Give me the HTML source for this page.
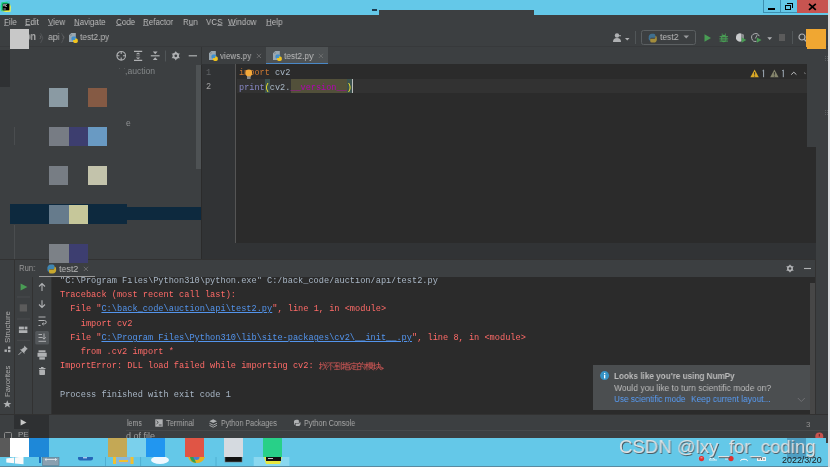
<!DOCTYPE html>
<html><head><meta charset="utf-8">
<style>
*{margin:0;padding:0;box-sizing:border-box}
html,body{width:830px;height:467px;overflow:hidden;background:#3c3f41;font-family:"Liberation Sans",sans-serif;color:#bbbbbb}
.a{position:absolute}
.t{position:absolute;white-space:pre;line-height:1;will-change:transform}
.m{font-family:"Liberation Mono",monospace}
.u{text-decoration:underline}
.mu{text-decoration:underline;text-decoration-color:#85878a;text-underline-offset:0px}
</style></head><body>
<!-- title bar -->
<div class="a" style="left:0;top:0;width:379px;height:14.5px;background:#64c8e8"></div>
<div class="a" style="left:379px;top:0;width:155px;height:10px;background:#64c8e8"></div>
<div class="a" style="left:534px;top:0;width:296px;height:15px;background:#64c8e8"></div>
<div class="a" style="left:372px;top:9px;width:5px;height:2px;background:#1d3c50"></div>
<!-- app icon -->
<svg class="a" style="left:-0.2px;top:1px" width="12" height="12"><defs><linearGradient id="pcg" x1="0" y1="0" x2="1" y2="1"><stop offset="0" stop-color="#21d789"/><stop offset="0.45" stop-color="#21d789"/><stop offset="0.75" stop-color="#fcf84a"/><stop offset="1" stop-color="#fcf84a"/></defs><path d="M1.5 1.2 L6.5 0.8 L9.2 0.3 L10.8 5.5 L10.6 10.8 L5 11 L1 10 L0.6 5z" fill="url(#pcg)"/><path d="M7 0.6 L9.2 0.3 L10 3 L8 2.5z" fill="#4fc8e0"/><rect x="2.6" y="2.6" width="6.8" height="6.8" fill="#000"/><path d="M3.4 3.5 h1.4 v1.4 h-1.4z M5.5 3.5 h1.5 M5.5 3.5 v2 M5.5 5.5 h1.5" stroke="#e8e8e8" stroke-width="0.6" fill="none"/><path d="M3.4 8 h2.5" stroke="#e8e8e8" stroke-width="0.7"/></svg>
<!-- window buttons -->
<div class="a" style="left:762.5px;top:0;width:35px;height:13.2px;border:1px solid #3d8fb0;border-top:none;border-right:none"></div>
<div class="a" style="left:780.2px;top:0;width:1px;height:13px;background:#3d8fb0"></div>
<div class="a" style="left:797.2px;top:0;width:30.6px;height:13.2px;background:#c75450"></div>
<div class="a" style="left:768.3px;top:8px;width:7.2px;height:1.7px;background:#000"></div>
<div class="a" style="left:785.3px;top:5px;width:6px;height:4.6px;border:1.3px solid #000"></div>
<div class="a" style="left:787px;top:3.4px;width:6px;height:4.6px;border-top:1.3px solid #000;border-right:1.3px solid #000"></div>
<svg class="a" style="left:808px;top:3px" width="9" height="8"><path d="M1 0.8 L7.8 6.8 M7.8 0.8 L1 6.8" stroke="#000" stroke-width="1.7"/></svg>
<!-- menu -->
<div class="t" style="left:4.2px;top:18px;font-size:9.3px;color:#bbb;transform:scaleX(0.86);transform-origin:0 0"><span class="mu">F</span>ile</div>
<div class="t" style="left:25.3px;top:18px;font-size:9.3px;color:#bbb;transform:scaleX(0.86);transform-origin:0 0"><span class="mu">E</span>dit</div>
<div class="t" style="left:48.2px;top:18px;font-size:9.3px;color:#bbb;transform:scaleX(0.86);transform-origin:0 0"><span class="mu">V</span>iew</div>
<div class="t" style="left:73.5px;top:18px;font-size:9.3px;color:#bbb;transform:scaleX(0.86);transform-origin:0 0"><span class="mu">N</span>avigate</div>
<div class="t" style="left:115.7px;top:18px;font-size:9.3px;color:#bbb;transform:scaleX(0.86);transform-origin:0 0"><span class="mu">C</span>ode</div>
<div class="t" style="left:143.4px;top:18px;font-size:9.3px;color:#bbb;transform:scaleX(0.86);transform-origin:0 0"><span class="mu">R</span>efactor</div>
<div class="t" style="left:182.7px;top:18px;font-size:9.3px;color:#bbb;transform:scaleX(0.86);transform-origin:0 0">R<span class="mu">u</span>n</div>
<div class="t" style="left:205.5px;top:18px;font-size:9.3px;color:#bbb;transform:scaleX(0.86);transform-origin:0 0">VC<span class="mu">S</span></div>
<div class="t" style="left:227.7px;top:18px;font-size:9.3px;color:#bbb;transform:scaleX(0.86);transform-origin:0 0"><span class="mu">W</span>indow</div>
<div class="t" style="left:266px;top:18px;font-size:9.3px;color:#bbb;transform:scaleX(0.86);transform-origin:0 0"><span class="mu">H</span>elp</div>
<!-- breadcrumb -->

<div class="t" style="left:39px;top:33.3px;font-size:8.5px;color:#6e6e6e">&#8250;</div>
<div class="t" style="left:47.70px;top:32.22px;font-size:9.77px;color:#bbb;transform:scaleX(0.879);transform-origin:0 0">api</div>
<div class="t" style="left:61.5px;top:33.3px;font-size:8.5px;color:#6e6e6e">&#8250;</div>
<div class="t" style="left:80.20px;top:32.22px;font-size:9.77px;color:#bbb;transform:scaleX(0.854);transform-origin:0 0">test2.py</div>
<!-- toolbar line -->
<div class="a" style="left:0;top:46.2px;width:830px;height:1px;background:#37393b"></div>
<div class="t" style="left:25.2px;top:32.4px;font-size:10px;color:#bdbdbd;font-weight:bold;transform:scaleX(0.9);transform-origin:0 0;opacity:0.85">on</div>
<div class="a" style="left:10px;top:29px;width:19px;height:20px;background:#c8c8c8"></div>


<!-- breadcrumb chevrons & icon -->
<svg class="a" style="left:39.5px;top:32.5px" width="4" height="11"><path d="M0.6 0.3 L2.9 5 L0.6 9.9" stroke="#5c5f61" stroke-width="0.7" fill="none"/></svg>
<svg class="a" style="left:61px;top:32.5px" width="4" height="11"><path d="M0.6 0.3 L2.9 5 L0.6 9.9" stroke="#5c5f61" stroke-width="0.7" fill="none"/></svg>
<svg class="a" style="left:69px;top:33px" width="10" height="11"><path d="M2.3 0 H6.8 V9 H0 V2.3z" fill="#9aa7b0"/><path d="M1 2.3 H2.3 V1" stroke="#6c7880" stroke-width="0.5" fill="none"/><rect x="2.4" y="3.6" width="5" height="3.9" rx="1.6" fill="#3d8fd0"/><rect x="4.1" y="5.4" width="4.7" height="4.5" rx="1.6" fill="#f2c41c"/><rect x="4.1" y="5.4" width="2" height="1.6" fill="#3d8fd0"/></svg>
<!-- right toolbar -->
<svg class="a" style="left:612px;top:33px" width="20" height="10"><circle cx="5" cy="2.5" r="2.2" fill="#afb1b3"/><path d="M1 9 q0-4 4-4 q4 0 4 4z" fill="#afb1b3"/><path d="M7 2 l2 0 l-1 2z" fill="#afb1b3"/><path d="M13 5 h4.5 l-2.25 2.5z" fill="#afb1b3"/></svg>
<div class="a" style="left:635px;top:31px;width:1px;height:12.5px;background:#515658"></div>
<div class="a" style="left:641px;top:30px;width:55px;height:14.5px;border:1px solid #5b5f61;border-radius:2.5px"></div>
<svg class="a" style="left:647.5px;top:32.8px" width="10" height="11"><path d="M0.8 4.8 a3.2 3.2 0 0 1 3.2-4 h1.8 a1.6 1.6 0 0 1 1.6 1.6 v2.4 h-4 a1.2 1.2 0 0 0-1.2 1.2 v1.8 a2.4 2.4 0 0 1-1.4-3z" fill="#3f6f8f"/><path d="M8.8 5.6 a3.2 3.2 0 0 1-3.2 4 h-1.8 a1.6 1.6 0 0 1-1.6-1.6 v-2.2 h4 a1.2 1.2 0 0 0 1.2-1.2 v-1.8 a2.4 2.4 0 0 1 1.4 2.8z" fill="#a38d3c"/></svg>
<div class="t" style="left:660.00px;top:33.10px;font-size:9.1px;color:#bbb;transform:scaleX(0.934);transform-origin:0 0">test2</div>
<svg class="a" style="left:683px;top:35px" width="7" height="5"><path d="M0.5 0.5 h5.5 l-2.75 3z" fill="#9a9c9e"/></svg>
<svg class="a" style="left:704px;top:33.5px" width="8" height="8"><path d="M0.5 0.3 L7 4 L0.5 7.7z" fill="#499c54"/></svg>
<svg class="a" style="left:719px;top:32.5px" width="10" height="10"><path d="M3.2 0.6 v1.2 M6.4 0.6 v1.2" stroke="#499c54" stroke-width="1"/><rect x="2.2" y="1.8" width="5.2" height="7.4" rx="2.4" fill="#499c54"/><path d="M0.6 3.6 h8.4 M0.4 5.9 h8.8 M0.6 8.1 h8.4" stroke="#499c54" stroke-width="1"/><path d="M3.2 4.75 h3.2 M3.2 7 h3.2" stroke="#3c3f41" stroke-width="0.9"/></svg>
<svg class="a" style="left:736px;top:33px" width="11" height="10"><path d="M5 0.4 a4.2 4.2 0 1 0 0 8.2z" fill="#c9cbcd"/><path d="M5 0.4 a4.2 4.2 0 0 1 3 1.4 v5.4 a4.2 4.2 0 0 1-3 1.4z" fill="#8a8c8e"/><path d="M5.6 4.2 L10.3 6.9 L5.6 9.7z" fill="#499c54"/></svg>
<svg class="a" style="left:751px;top:32.8px" width="12" height="10"><path d="M8.2 3.2 A3.9 3.9 0 1 0 5.5 8.3" stroke="#afb1b3" stroke-width="1" fill="none"/><path d="M4.3 5.5 L6.3 1.8" stroke="#afb1b3" stroke-width="0.9"/><path d="M5.8 4.4 L10.5 7.1 L5.8 9.8z" fill="#499c54"/></svg>
<svg class="a" style="left:766.5px;top:37px" width="6" height="4"><path d="M0.3 0.3 h4.8 l-2.4 2.6z" fill="#afb1b3"/></svg>
<div class="a" style="left:778.6px;top:34px;width:6.8px;height:7px;background:#5b5b5b"></div>
<div class="a" style="left:792px;top:31px;width:1px;height:12.5px;background:#515658"></div>
<svg class="a" style="left:798px;top:33px" width="10" height="10"><circle cx="4" cy="4" r="3" stroke="#afb1b3" stroke-width="1.2" fill="none"/><path d="M6.2 6.2 L9 9" stroke="#afb1b3" stroke-width="1.4"/></svg>
<div class="a" style="left:806px;top:29px;width:20px;height:20px;background:#f0a732"></div>

<!-- project panel -->
<div class="a" style="left:0;top:49.5px;width:9.6px;height:37.8px;background:#2f3133"></div>
<svg class="a" style="left:115px;top:50px" width="85" height="12">
<circle cx="6.2" cy="5.8" r="4.3" stroke="#afb1b3" stroke-width="1.1" fill="none"/>
<path d="M6.2 1.5 v2.5 M6.2 7.6 v2.5 M1.9 5.8 h2.5 M8 5.8 h2.5" stroke="#afb1b3" stroke-width="1.1"/>
<path d="M19 1.3 h8.2 M19 10.3 h8.2" stroke="#afb1b3" stroke-width="1.2"/>
<path d="M20.8 4.2 h4.6 l-2.3 -1.8z M20.8 7.4 h4.6 l-2.3 1.8z" fill="#afb1b3"/><path d="M21.5 5.8 h3.2" stroke="#afb1b3" stroke-width="0.6"/>
<path d="M35.8 5.8 h8.8" stroke="#afb1b3" stroke-width="1.2"/>
<path d="M37.8 1.5 h4.8 l-2.4 2.8z M37.8 10.1 h4.8 l-2.4 -2.8z" fill="#afb1b3"/>
<path d="M50.5 0.5 v11" stroke="#515658" stroke-width="1"/>
<g transform="translate(60.8,5.8)"><circle r="3.2" fill="#afb1b3"/><path d="M0 -4.8 L1.2 -2.6 L-1.2 -2.6z M0 4.8 L1.2 2.6 L-1.2 2.6z M-4.2 -2.4 L-1.6 -2.1 L-2.6 -0.3z M4.2 2.4 L1.6 2.1 L2.6 0.3z M4.2 -2.4 L1.6 -2.1 L2.6 -0.3z M-4.2 2.4 L-1.6 2.1 L-2.6 0.3z" fill="#afb1b3"/><circle r="1.4" fill="#3c3f41"/></g>
<path d="M73.7 5.8 h8.3" stroke="#afb1b3" stroke-width="1.2"/>
</svg>
<div class="a" style="left:119px;top:67.5px;width:1px;height:1px;background:#55585a"></div><div class="a" style="left:124.3px;top:67.5px;width:1px;height:1px;background:#55585a"></div><div class="t" style="left:125.2px;top:67px;font-size:8.6px;color:#85888a;transform:scaleX(1.0);transform-origin:0 0">,auction</div>
<div class="t" style="left:125.8px;top:118.6px;font-size:8.5px;color:#909294">e</div>
<div class="a" style="left:195.6px;top:65px;width:5.2px;height:103.5px;background:#4e5254"></div>
<div class="a" style="left:9.6px;top:204px;width:117px;height:19.8px;background:#0d293e"></div><div class="a" style="left:126.5px;top:206.6px;width:74.5px;height:13.8px;background:#0d293e"></div>
<div class="a" style="left:13.5px;top:127px;width:0.8px;height:18px;background:#4a4d4f"></div>
<div class="a" style="left:13.5px;top:225px;width:0.8px;height:34px;background:#4a4d4f"></div>
<!-- editor -->
<div class="a" style="left:201px;top:46.5px;width:605.5px;height:18px;background:#3c3f41"></div>
<div class="a" style="left:201px;top:64.2px;width:605.5px;height:194.5px;background:#2b2b2b"></div>
<div class="a" style="left:201.5px;top:64.2px;width:34px;height:179px;background:#313335"></div>
<div class="a" style="left:235.3px;top:64.2px;width:1.2px;height:179px;background:#555555"></div>
<div class="a" style="left:236.5px;top:78.7px;width:570px;height:14px;background:#323232"></div>
<div class="a" style="left:201.5px;top:243.2px;width:605px;height:15.5px;background:#313335"></div>
<div class="a" style="left:201px;top:64.2px;width:0.8px;height:194.5px;background:#2b2b2b"></div>
<div class="a" style="left:806.5px;top:146.5px;width:9.1px;height:96.7px;background:#2b2b2b"></div><div class="a" style="left:806.5px;top:243.2px;width:9.1px;height:15.5px;background:#313335"></div>
<!-- tabs -->
<div class="a" style="left:201px;top:47px;width:0.9px;height:17.5px;background:#323435"></div>
<div class="a" style="left:265.8px;top:46.5px;width:62.4px;height:17.7px;background:#4e5254"></div>
<div class="a" style="left:265.8px;top:62.5px;width:62.4px;height:1.8px;background:#4a88c7"></div>
<div class="t" style="left:220.00px;top:50.93px;font-size:9.66px;color:#bbb;transform:scaleX(0.844);transform-origin:0 0">views.py</div>
<div class="t" style="left:283.80px;top:50.93px;font-size:9.66px;color:#bbb;transform:scaleX(0.868);transform-origin:0 0">test2.py</div>
<svg class="a" style="left:256px;top:52.5px" width="6" height="6"><path d="M0.8 0.8 L5 5 M5 0.8 L0.8 5" stroke="#6e7072" stroke-width="0.9"/></svg>
<svg class="a" style="left:318px;top:52.5px" width="6" height="6"><path d="M0.8 0.8 L5 5 M5 0.8 L0.8 5" stroke="#6e7072" stroke-width="0.9"/></svg>
<svg class="a" style="left:208.5px;top:51px" width="10" height="11"><path d="M2.3 0 H6.8 V9 H0 V2.3z" fill="#9aa7b0"/><path d="M1 2.3 H2.3 V1" stroke="#6c7880" stroke-width="0.5" fill="none"/><rect x="2.4" y="3.6" width="5" height="3.9" rx="1.6" fill="#3d8fd0"/><rect x="4.1" y="5.4" width="4.7" height="4.5" rx="1.6" fill="#f2c41c"/><rect x="4.1" y="5.4" width="2" height="1.6" fill="#3d8fd0"/></svg>
<svg class="a" style="left:272.5px;top:51px" width="10" height="11"><path d="M2.3 0 H6.8 V9 H0 V2.3z" fill="#9aa7b0"/><path d="M1 2.3 H2.3 V1" stroke="#6c7880" stroke-width="0.5" fill="none"/><rect x="2.4" y="3.6" width="5" height="3.9" rx="1.6" fill="#3d8fd0"/><rect x="4.1" y="5.4" width="4.7" height="4.5" rx="1.6" fill="#f2c41c"/><rect x="4.1" y="5.4" width="2" height="1.6" fill="#3d8fd0"/></svg>
<!-- code -->
<div class="t m" style="left:206.3px;top:68.6px;font-size:8.55px;color:#606366">1</div>
<div class="t m" style="left:206.3px;top:83.1px;font-size:8.55px;color:#a4a3a3">2</div>
<div class="a" style="left:264.8px;top:78.7px;width:5.1px;height:14px;background:#3b514d"></div>
<div class="a" style="left:290.7px;top:78.7px;width:56.4px;height:14px;background:#52503a"></div>
<div class="a" style="left:347.1px;top:78.7px;width:5.1px;height:14px;background:#3b514d"></div>
<div class="a" style="left:352px;top:79px;width:1px;height:13.5px;background:#bbbbbb"></div>
<div class="t m" style="left:239px;top:69px;font-size:8.55px;color:#a9b7c6"><span style="color:#cc7832">import</span> cv2</div>
<div class="t m" style="left:239px;top:83.5px;font-size:8.55px;color:#a9b7c6"><span style="color:#8888c6">print</span><span style="color:#ffef28">(</span>cv2.<span style="color:#b200b2">__version__</span><span style="color:#ffef28">)</span></div>
<svg class="a" style="left:244.5px;top:68.5px" width="8" height="11"><rect x="2" y="6.5" width="3.6" height="3.6" rx="0.5" fill="#8a8a8a"/><circle cx="3.8" cy="3.9" r="3.4" fill="#f4a93a"/></svg>
<!-- warnings -->
<svg class="a" style="left:750px;top:68.5px" width="60" height="10">
<path d="M4.6 0.5 L8.8 8.2 L0.4 8.2z" fill="#dba926"/><path d="M4.6 3 v2.8 M4.6 6.6 v1" stroke="#2b2b2b" stroke-width="0.9"/>
<path d="M24.4 0.5 L28.6 8.2 L20.2 8.2z" fill="#85856c"/><path d="M24.4 3 v2.8 M24.4 6.6 v1" stroke="#2b2b2b" stroke-width="0.9"/>
<path d="M12.5 1.8 L13.6 1 V8.2" stroke="#9eaab6" stroke-width="1" fill="none"/>
<path d="M32.2 1.8 L33.3 1 V8.2" stroke="#9eaab6" stroke-width="1" fill="none"/>
<path d="M41.2 5.6 L43.8 3.2 L46.4 5.6" stroke="#c0c2c4" stroke-width="1" fill="none"/>
<path d="M54.2 3.8 L55.5 4.6" stroke="#a0a2a4" stroke-width="0.9"/>
</svg>
<!-- right strip -->
<div class="a" style="left:828.4px;top:0;width:1.6px;height:467px;background:#d9dcde;z-index:5"></div>

<svg class="a" style="left:825px;top:56px" width="3" height="62"><g fill="#5a5d5f"><rect x="0" y="0" width="1" height="1"/><rect x="0" y="2" width="1" height="1"/><rect x="0" y="4" width="1" height="1"/><rect x="2" y="0" width="1" height="1"/><rect x="2" y="2" width="1" height="1"/><rect x="2" y="4" width="1" height="1"/><rect x="0" y="54" width="1" height="1"/><rect x="0" y="56" width="1" height="1"/><rect x="0" y="58" width="1" height="1"/><rect x="2" y="54" width="1" height="1"/><rect x="2" y="56" width="1" height="1"/><rect x="2" y="58" width="1" height="1"/></g></svg>
<!-- run panel -->
<div class="a" style="left:0;top:259.2px;width:815.5px;height:0.8px;background:#323232"></div>
<div class="a" style="left:13.7px;top:259px;width:0.8px;height:156px;background:#323232"></div>
<div class="t" style="left:18.80px;top:263.60px;font-size:9.08px;color:#999;transform:scaleX(0.852);transform-origin:0 0">Run:</div>
<svg class="a" style="left:47px;top:263.8px" width="10" height="10"><path d="M0.5 5 a3.4 3.4 0 0 1 3.4-4.4 h1.9 a1.7 1.7 0 0 1 1.7 1.7 v2.6 h-4.2 a1.2 1.2 0 0 0-1.2 1.2 v1.9 a2.5 2.5 0 0 1-1.6-3z" fill="#3f86b2"/><path d="M9 5.2 a3.4 3.4 0 0 1-3.4 4.4 h-1.9 a1.7 1.7 0 0 1-1.7-1.7 v-2.4 h4.2 a1.2 1.2 0 0 0 1.2-1.2 v-1.9 a2.5 2.5 0 0 1 1.6 2.8z" fill="#c9a82e"/></svg>
<div class="t" style="left:59.30px;top:263.51px;font-size:9.89px;color:#bbb;transform:scaleX(0.894);transform-origin:0 0">test2</div>
<svg class="a" style="left:83px;top:266px" width="6" height="6"><path d="M0.8 0.8 L5 5 M5 0.8 L0.8 5" stroke="#6e7072" stroke-width="0.9"/></svg>
<div class="a" style="left:39px;top:275.8px;width:56.4px;height:1.4px;background:#9a9a9a"></div>
<svg class="a" style="left:781px;top:264px" width="30" height="10"><g transform="translate(9,4.5)"><circle r="2.9" fill="#afb1b3"/><path d="M0 -4.3 L1.1 -2.3 L-1.1 -2.3z M0 4.3 L1.1 2.3 L-1.1 2.3z M-3.8 -2.2 L-1.4 -1.9 L-2.4 -0.2z M3.8 2.2 L1.4 1.9 L2.4 0.2z M3.8 -2.2 L1.4 -1.9 L2.4 -0.2z M-3.8 2.2 L-1.4 1.9 L-2.4 0.2z" fill="#afb1b3"/><circle r="1.3" fill="#3c3f41"/></g><path d="M23 4.5 h7.5" stroke="#afb1b3" stroke-width="1.1"/></svg>
<div class="a" style="left:51.3px;top:276.8px;width:764px;height:137.5px;background:#2b2b2b"></div>
<div class="a" style="left:31.9px;top:277px;width:0.9px;height:137px;background:#323232"></div>
<div class="a" style="left:51px;top:277px;width:0.8px;height:137px;background:#323232"></div>
<div class="a" style="left:815.2px;top:259px;width:1px;height:156px;background:#323232"></div>
<div class="a" style="left:809.5px;top:283.2px;width:5.7px;height:131px;background:#474747"></div>
<!-- run toolbar col1 -->
<svg class="a" style="left:16px;top:280px" width="17" height="80">
<path d="M4.6 3.4 L11.4 7 L4.6 10.6z" fill="#499c54"/>
<path d="M1 17 h13" stroke="#4b4e50" stroke-width="0.8"/>
<rect x="3.7" y="24.3" width="7.3" height="7.2" fill="#5b5b5b"/>
<path d="M1 39 h13" stroke="#4b4e50" stroke-width="0.8"/>
<rect x="2.9" y="46.6" width="5" height="2.8" fill="#afb1b3"/><rect x="8.6" y="46.6" width="2.8" height="2.8" fill="#afb1b3"/><rect x="2.9" y="50.2" width="8.5" height="2.8" fill="#afb1b3"/>
<path d="M1 60.3 h13" stroke="#4b4e50" stroke-width="0.8"/>
<path d="M8.2 65.5 L11.8 69.1 L10.6 69.6 L8.3 72.6 L8.6 74 L3.8 69.2 L5.2 69.5 L8.2 67.2z" fill="#afb1b3"/><path d="M5.8 71.6 L2.6 74.8" stroke="#afb1b3" stroke-width="1"/>
</svg>
<!-- col2 -->
<svg class="a" style="left:34px;top:280px" width="17" height="100">
<path d="M8 3.5 v7.5 M5 6.5 L8 3.5 L11 6.5" stroke="#afb1b3" stroke-width="1.1" fill="none"/>
<path d="M8 20.2 v7.3 M5 24.5 L8 27.5 L11 24.5" stroke="#afb1b3" stroke-width="1.1" fill="none"/>
<path d="M4.5 37 h7 M4.5 40.5 h6 a1.7 1.7 0 0 1 0 3.4 h-2 M9.5 42.7 l-1.3 1.2 l1.3 1.2 M4.5 45.5 h2" stroke="#afb1b3" stroke-width="1" fill="none"/>
<rect x="1.2" y="51" width="13.8" height="13.6" rx="1.5" fill="#53575a"/>
<path d="M4.5 54.5 h3.5 M4.5 57.5 h3.5 M4.5 61.3 h7.5 M10 53.5 v5.5 M8.3 57.3 L10 59.2 L11.7 57.3" stroke="#afb1b3" stroke-width="1" fill="none"/>
<rect x="4.5" y="70.3" width="7" height="2" fill="#afb1b3"/><rect x="3.5" y="72.8" width="9.2" height="4" fill="#afb1b3"/><rect x="5.3" y="77.2" width="5.6" height="2.4" fill="#afb1b3"/>
<path d="M5 88.5 h6.5 M7 87.5 h2.5" stroke="#afb1b3" stroke-width="1"/><rect x="5.3" y="89.5" width="5.7" height="5.5" rx="0.8" fill="#afb1b3"/>
</svg>
<!-- left strip vertical text -->
<div class="t" style="left:4.2px;top:342.8px;font-size:7.9px;color:#a8a8a8;transform:rotate(-90deg);transform-origin:0 0">Structure</div>
<svg class="a" style="left:4px;top:346px" width="7" height="7"><rect x="0.5" y="3.5" width="2.4" height="2.4" fill="#afb1b3"/><rect x="4" y="0.5" width="2.4" height="2.4" fill="#afb1b3"/><rect x="4" y="3.8" width="2.4" height="2.4" fill="#afb1b3"/></svg>
<div class="t" style="left:4.2px;top:396.8px;font-size:7.6px;color:#a8a8a8;transform:rotate(-90deg);transform-origin:0 0">Favorites</div>
<svg class="a" style="left:3px;top:399.5px" width="9" height="8"><path d="M4.3 0.3 L5.4 3 L8.3 3 L6 4.8 L6.9 7.6 L4.3 5.9 L1.7 7.6 L2.6 4.8 L0.3 3 L3.2 3z" fill="#afb1b3"/></svg>
<!-- console -->
<div class="a" style="left:51.3px;top:276.8px;width:758px;height:137.5px;overflow:hidden"><div class="t m" style="left:8.5px;top:-0.1px;font-size:8.63px;color:#a9b7c6">"C:\Program Files\Python310\python.exe" C:/back_code/auction/api/test2.py</div>
<div class="t m" style="left:8.5px;top:14.2px;font-size:8.63px;color:#ff6b68">Traceback (most recent call last):</div>
<div class="t m" style="left:8.5px;top:28.6px;font-size:8.63px;color:#ff6b68">  File "<span class="u" style="color:#5394ec">C:\back_code\auction\api\test2.py</span>", line 1, in &lt;module&gt;</div>
<div class="t m" style="left:8.5px;top:42.8px;font-size:8.63px;color:#ff6b68">    import cv2</div>
<div class="t m" style="left:8.5px;top:57.1px;font-size:8.63px;color:#ff6b68">  File "<span class="u" style="color:#5394ec">C:\Program Files\Python310\lib\site-packages\cv2\__init__.py</span>", line 8, in &lt;module&gt;</div>
<div class="t m" style="left:8.5px;top:71.4px;font-size:8.63px;color:#ff6b68">    from .cv2 import *</div>
<div class="t m" style="left:8.5px;top:85.7px;font-size:8.63px;color:#ff6b68">ImportError: DLL load failed while importing cv2: </div>
<div class="t m" style="left:8.5px;top:114.3px;font-size:8.63px;color:#a9b7c6">Process finished with exit code 1</div></div>

<svg class="a" style="left:318.5px;top:361.8px" width="66" height="9"><g stroke="#d05856" stroke-width="0.7" fill="none" stroke-linecap="square"><path transform="translate(0.00,0)" d="M0.3 2.5h2.8 M1.6 0.4v6.8l-0.8-0.6 M0.3 6.2l2.8-1.8 M3.5 3h4.3 M4.3 0.6l3.3 7 M7.5 3.8l-3.5 3.8 M6.3 0.4l1 0.8"/><path transform="translate(7.72,0)" d="M0.5 0.9h7 M4.5 1l-3.8 4.5 M4 2.5v5.3 M5.2 3.5l2.3 2.3"/><path transform="translate(15.44,0)" d="M0.3 0.8h4.4 M2.5 0.9l-1.8 2.8l3.2-0.3 M0.5 4.7h4 M2.5 3.2v4 M0.2 7.4h4.6 M5.5 1.5v4.5 M7.2 0.4v7.2l-0.8-0.5"/><path transform="translate(23.16,0)" d="M0.3 2.5h2.8 M1.6 0.4v6.8l-0.8-0.6 M0.3 6.2l2.8-1.8 M4 0.4v2.2h3.5 M4 1.8l3-1.2 M4 3.8h3.5v4h-3.5z M4 5.7h3.5"/><path transform="translate(30.88,0)" d="M4 0.2v1 M0.8 2.6v-1h6.5v1 M2.2 3.7h3.8 M4 3.7v3.5 M4 5.2h2 M2 4.6l-1.5 3 M2 6.5c1.5 1.2 3.5 1.2 5.7 1.2"/><path transform="translate(38.60,0)" d="M2 0.2l-0.6 1.2 M0.6 1.6h2.6v6h-2.6z M0.6 4.5h2.6 M5 0.3l-0.9 2 M4.5 2.2h2.8v5.2l-0.9-0.5 M4.8 4.2l0.9 1.2"/><path transform="translate(46.32,0)" d="M0.2 2.4h2.8 M1.6 0.3v7.5 M1.6 2.8l-1.3 3 M1.7 3l1.1 1.4 M3.4 1.1h4.4 M4.6 0.2v1.6 M6.6 0.2v1.6 M4.2 2.4h3.2v2.6h-3.2z M4.2 3.7h3.2 M3.4 5.8h4.4 M5.6 5v0.8l-2 2 M5.8 6.1l2 1.7"/><path transform="translate(54.04,0)" d="M0.2 3.2h2.6 M1.5 1v5.6 M0.2 7.2l2.8-1 M3.8 2.5h3.3v2.6 M3.3 5.1h4.6 M5.5 0.4v4.8l-2.2 2.7 M5.6 5.3l2.2 2.5"/><circle cx="62.96" cy="6.4" r="1"/></g></svg>
<!-- mosaic -->
<div class="a" style="left:49px;top:88px;width:19px;height:19px;background:#8a9aa3"></div>
<div class="a" style="left:88px;top:88px;width:19px;height:19px;background:#855a44"></div>
<div class="a" style="left:49px;top:127px;width:19.5px;height:19px;background:#777c84"></div>
<div class="a" style="left:68.5px;top:127px;width:19.5px;height:19px;background:#3d3e6f"></div>
<div class="a" style="left:88px;top:127px;width:19px;height:19px;background:#699ac3"></div>
<div class="a" style="left:49px;top:166px;width:19px;height:19px;background:#777d84"></div>
<div class="a" style="left:88px;top:166px;width:19px;height:19px;background:#c3c3ab"></div>
<div class="a" style="left:49px;top:205px;width:19.5px;height:19px;background:#667b8c"></div>
<div class="a" style="left:68.5px;top:205px;width:19.5px;height:19px;background:#c6c79a"></div>
<div class="a" style="left:49px;top:243.5px;width:19.5px;height:19.5px;background:#7c8187"></div>
<div class="a" style="left:68.5px;top:243.5px;width:19.5px;height:19.5px;background:#3d3e70"></div>
<!-- notification -->
<div class="a" style="left:592.6px;top:364.6px;width:217.8px;height:45.2px;background:#4b4e50"></div>
<svg class="a" style="left:599.5px;top:370.7px" width="10" height="10"><circle cx="4.6" cy="4.6" r="4.5" fill="#3592c4"/><rect x="4" y="3.8" width="1.3" height="3.6" fill="#fff"/><rect x="4" y="1.9" width="1.3" height="1.2" fill="#fff"/></svg>
<div class="t" style="left:613.70px;top:370.95px;font-size:9.46px;font-weight:bold;color:#bbb;transform:scaleX(0.863);transform-origin:0 0">Looks like you're using NumPy</div>
<div class="t" style="left:613.70px;top:383.11px;font-size:9.86px;color:#bbb;transform:scaleX(0.866);transform-origin:0 0">Would you like to turn scientific mode on?</div>
<div class="t" style="left:613.70px;top:394.43px;font-size:9.66px;color:#589df6;transform:scaleX(0.853);transform-origin:0 0">Use scientific mode</div>
<div class="t" style="left:691.40px;top:394.43px;font-size:9.66px;color:#589df6;transform:scaleX(0.867);transform-origin:0 0">Keep current layout...</div>
<svg class="a" style="left:797px;top:397px" width="9" height="6"><path d="M0.8 1 L4.3 4.5 L7.8 1" stroke="#6e7072" stroke-width="1" fill="none"/></svg>
<!-- bottom strip -->
<div class="a" style="left:0;top:414.5px;width:828px;height:23.5px;background:#3c3f41"></div>
<div class="a" style="left:0;top:414.3px;width:828px;height:0.8px;background:#323232"></div>
<div class="a" style="left:126px;top:429.5px;width:702px;height:0.8px;background:#46494b"></div>
<div class="a" style="left:13.5px;top:414.5px;width:35.5px;height:23.5px;background:#2e3032"></div>
<svg class="a" style="left:20px;top:419px" width="8" height="8"><path d="M0.6 0.3 L6.5 3.4 L0.6 6.6z" fill="#c8c8c8"/></svg>
<div class="a" style="left:0;top:429px;width:29px;height:9px;background:#3c3f41"></div>
<div class="a" style="left:4.2px;top:431.5px;width:7.8px;height:8px;border:1px solid #8a8a8a;border-radius:1.5px"></div>
<div class="a" style="left:0;top:429px;width:29px;height:9px;overflow:hidden"><div class="t" style="left:18px;top:2.2px;font-size:8px;color:#a0a0a0">PEI</div></div>
<div class="t" style="left:126.90px;top:418.67px;font-size:8.39px;color:#a8a8a8;transform:scaleX(0.846);transform-origin:0 0">lems</div>
<svg class="a" style="left:155px;top:419px" width="8" height="8"><rect x="0.3" y="0.3" width="7.4" height="7.4" fill="#afb1b3"/><path d="M1.5 1.8 L3.3 3.4 L1.5 5" stroke="#3c3f41" stroke-width="0.9" fill="none"/><path d="M3.8 6 h2.8" stroke="#3c3f41" stroke-width="0.9"/></svg>
<div class="t" style="left:166.00px;top:418.67px;font-size:8.39px;color:#a8a8a8;transform:scaleX(0.890);transform-origin:0 0">Terminal</div>
<svg class="a" style="left:209px;top:419px" width="9" height="9"><path d="M4.2 0.3 L8 2.2 L4.2 4.1 L0.4 2.2z" fill="#afb1b3"/><path d="M0.4 4.3 L4.2 6.2 L8 4.3 M0.4 6.3 L4.2 8.2 L8 6.3" stroke="#afb1b3" stroke-width="0.9" fill="none"/></svg>
<div class="t" style="left:220.50px;top:418.67px;font-size:8.39px;color:#a8a8a8;transform:scaleX(0.857);transform-origin:0 0">Python Packages</div>
<svg class="a" style="left:292.5px;top:419px" width="9" height="9"><path d="M1 3.6 a2.4 2.4 0 0 1 2.4-2.8 h1.3 a1.2 1.2 0 0 1 1.2 1.2 v2 h-3.3 a0.8 0.8 0 0 0-0.8 0.8 v1.2 a1.6 1.6 0 0 1-0.8-1.6z M7.5 4.2 a2.4 2.4 0 0 1-2.4 2.9 h-1.3 a1.2 1.2 0 0 1-1.2-1.2 v-1.4 h3.3 a0.8 0.8 0 0 0 0.8-0.8 v-1.2 a1.6 1.6 0 0 1 0.8 1.6z" fill="#afb1b3"/></svg>
<div class="t" style="left:304.20px;top:418.67px;font-size:8.39px;color:#a8a8a8;transform:scaleX(0.866);transform-origin:0 0">Python Console</div>
<div class="a" style="left:120px;top:429px;width:60px;height:9px;overflow:hidden"><div class="t" style="left:6.3px;top:3px;font-size:9px;color:#a0a0a0">d of file</div></div>
<svg class="a" style="left:814.5px;top:431.5px" width="9" height="7"><circle cx="4.3" cy="4.5" r="4" fill="#c75450"/><path d="M4.3 2 v2.5" stroke="#5a2020" stroke-width="1"/></svg>
<!-- taskbar -->
<div class="a" style="left:0;top:437.8px;width:828.6px;height:29.2px;background:#64c8e8"></div>
<div class="a" style="left:0;top:438px;width:10px;height:19px;background:#5a5a5a"></div>
<div class="a" style="left:10px;top:438px;width:19px;height:19px;background:#ffffff"></div>
<div class="a" style="left:29px;top:438px;width:19.5px;height:19px;background:#1e88d8"></div>
<div class="a" style="left:107.5px;top:438px;width:19px;height:19px;background:#c4a855"></div>
<div class="a" style="left:126.5px;top:438px;width:19px;height:19px;background:#7ad0ec"></div>
<div class="a" style="left:145.8px;top:438px;width:19.2px;height:19px;background:#2196f0"></div>
<div class="a" style="left:184.9px;top:438px;width:19.3px;height:19px;background:#e05545"></div>
<div class="a" style="left:223.9px;top:438px;width:19.2px;height:19px;background:#d5dae0"></div>
<div class="a" style="left:262.8px;top:438px;width:19.2px;height:19px;background:#28d088"></div>
<div class="a" style="left:787.3px;top:438px;width:18.8px;height:21px;background:#4e9ec2"></div>
<!-- taskbar icons (lower part) -->
<svg class="a" style="left:0;top:457px" width="300" height="10">
<path d="M6.3 1.5 L14 0.6 L14 6.2 L6.3 5.5z M14.8 0.5 L23.5 -0.5 L23.5 7.2 L14.8 6.4z" fill="#fafafa"/>
<rect x="39" y="0" width="2" height="6" fill="#1a70c0"/><rect x="42.5" y="0.5" width="16.5" height="8" fill="#8aa0b0" stroke="#60788a" stroke-width="0.6"/><path d="M45 2.5 h11.5 M45 2.5 l1.5-1.2 M45 2.5 l1.5 1.2 M56.5 2.5 l-1.5-1.2 M56.5 2.5 l-1.5 1.2" stroke="#e8eef4" stroke-width="0.8" fill="none"/>
<rect x="78" y="-1" width="15" height="4.5" rx="2.2" fill="#2566b8"/><path d="M83 0.8 h4" stroke="#e0f0ff" stroke-width="1"/>
<path d="M105.5 0 v10 M140.6 0 v10 M216 0 v10" stroke="#4aa8cc" stroke-width="0.8"/>
<rect x="113" y="0" width="20.5" height="7" fill="#8ab8d8"/><rect x="113" y="0" width="3" height="7" fill="#f0c030"/><rect x="130.5" y="0" width="3" height="7" fill="#f0c030"/><rect x="119" y="3" width="9" height="2" fill="#f0c030"/>
<ellipse cx="160" cy="3" rx="9" ry="4" fill="#f0f8ff"/>
<path d="M188 0 a9 9 0 0 0 17 0z" fill="#e8b020"/><path d="M190 0 a7 7 0 0 0 6 6 l-2-6z" fill="#30a050"/><circle cx="196.5" cy="0" r="3" fill="#4a80d0"/>
<rect x="225" y="-1" width="17" height="6" fill="#111" stroke="#777" stroke-width="0.6"/>
<rect x="253.7" y="-1" width="35.7" height="10" fill="#8ad8f0"/>
<path d="M264 0 L282 0 L280 7 L266 7z" fill="#e8e840"/><rect x="266" y="-1" width="15" height="5" fill="#111"/><path d="M268 1.5 h5" stroke="#ddd" stroke-width="0.9"/>
</svg>
<div class="t" style="left:781.6px;top:456.2px;font-size:8.93px;color:#1a1a1a">2022/3/20</div>
<div class="a" style="left:826px;top:437.8px;width:2.6px;height:5.2px;background:#3c3f41"></div>
<svg class="a" style="left:690px;top:455px" width="90" height="8">
<path d="M9 2 v3" stroke="#a8c8d8" stroke-width="0.8"/>
<circle cx="11.5" cy="3.6" r="2.6" fill="#e03030"/><path d="M10.5 2.8 h2" stroke="#fff" stroke-width="0.6"/>
<path d="M19 4.5 l3-2 l3 2 M19 5 h8" stroke="#f0f4f6" stroke-width="0.9" fill="none"/>
<circle cx="41" cy="3.6" r="2.6" fill="#e03030"/><path d="M35 4 h3" stroke="#f0f4f6" stroke-width="0.9"/>
<path d="M50 6 q4-4 8 0 M51 4.5 h6" stroke="#f0f4f6" stroke-width="0.9" fill="none"/>
<rect x="67" y="2" width="9" height="4" fill="#f4f4f4"/><path d="M69 3.2 v1.6 M71.5 3.2 v1.6 M74 3.2 v1.6" stroke="#222" stroke-width="0.8"/>
</svg>
<div class="a" style="left:803px;top:420px;width:7px;height:9px;overflow:hidden"><div class="t" style="left:2.6px;top:0.6px;font-size:8px;color:#909090">3</div></div>
<div class="a" style="left:0;top:466px;width:828.6px;height:1px;background:#5a8aa0"></div>
<!-- watermark -->
<div class="t" style="left:619.3px;top:438.1px;font-size:18.8px;color:#dde1e3;text-shadow:0.9px 0.9px 0.5px #4d5c64;transform:scaleX(0.99);transform-origin:0 0">CSDN @lxy_for_coding</div>
</body></html>
